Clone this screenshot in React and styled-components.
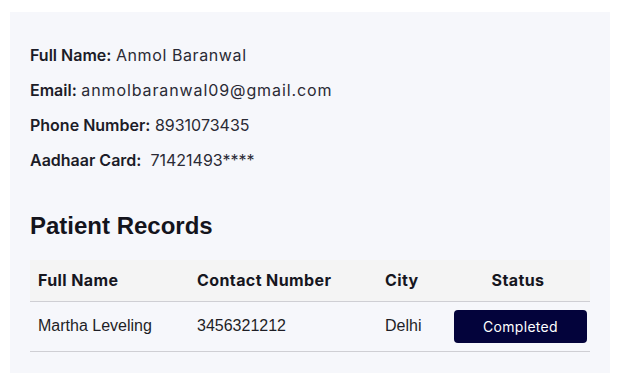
import React from "react";
import styled, { createGlobalStyle } from "styled-components";

const GlobalStyle = createGlobalStyle`
  body {
    margin: 0;
    background: #ffffff;
  }
`;

const profile = [
  { label: "Full Name:", value: "Anmol Baranwal" },
  { label: "Email:", value: "anmolbaranwal09@gmail.com", wide: true },
  { label: "Phone Number:", value: "8931073435", numeric: true },
  { label: "Aadhaar Card:", value: " 71421493****", numeric: true },
];

const records = [
  { name: "Martha Leveling", contact: "3456321212", city: "Delhi", status: "Completed" },
];

export default function App() {
  return (
    <>
      <GlobalStyle />
      <Page>
        <Panel>
          <Details>
            {profile.map((p) => (
              <DetailRow key={p.label}>
                <Label>{p.label}</Label>{" "}
                <Value $numeric={p.numeric} $wide={p.wide}>{p.value}</Value>
              </DetailRow>
            ))}
          </Details>

          <Heading>Patient Records</Heading>

          <Table>
            <thead>
              <tr>
                <Th $width="159px">Full Name</Th>
                <Th $width="188px">Contact Number</Th>
                <Th $width="69px">City</Th>
                <Th $center>Status</Th>
              </tr>
            </thead>
            <tbody>
              {records.map((r) => (
                <tr key={r.name}>
                  <Td>{r.name}</Td>
                  <Td>{r.contact}</Td>
                  <Td>{r.city}</Td>
                  <Td>
                    <StatusBadge>{r.status}</StatusBadge>
                  </Td>
                </tr>
              ))}
            </tbody>
          </Table>
        </Panel>
      </Page>
    </>
  );
}

const Page = styled.div`
  padding: 12px 21px 0 10px;
`;

const Panel = styled.div`
  background: #f6f7fb;
  padding: 32px 20px 22px 20px;
  min-height: 340px;
  box-sizing: border-box;
`;

const Details = styled.div`
  display: flex;
  flex-direction: column;
  gap: 13px;
`;

const DetailRow = styled.div`
  font-family: "Inter", "Noto Sans", sans-serif;
  font-size: 16px;
  line-height: 22px;
  color: #1c1c28;
  white-space: pre;
`;

const Label = styled.span`
  font-weight: 600;
`;

const Value = styled.span`
  font-weight: 400;
  letter-spacing: ${(p) => (p.$numeric ? "0" : p.$wide ? "0.9px" : "0.6px")};
  color: #2a2a35;
`;

const Heading = styled.h2`
  margin: 41px 0 0 0;
  font-family: "Liberation Sans", Arial, sans-serif;
  font-size: 24px;
  font-weight: 700;
  line-height: 28px;
  color: #14141c;
`;

const Table = styled.table`
  margin-top: 20px;
  width: 560px;
  border-collapse: collapse;
  table-layout: fixed;
`;

const Th = styled.th`
  box-sizing: border-box;
  width: ${(p) => p.$width || "auto"};
  height: 41px;
  padding: 0 8px;
  background: #f4f4f4;
  border-bottom: 1px solid #cfcfd4;
  text-align: ${(p) => (p.$center ? "center" : "left")};
  font-family: "Inter", "Noto Sans", sans-serif;
  font-size: 16px;
  font-weight: 700;
  letter-spacing: 0.4px;
  color: #16161e;
`;

const Td = styled.td`
  height: 49px;
  padding: 0 3px 0 8px;
  border-bottom: 1px solid #cfcfd4;
  font-family: "Liberation Sans", Arial, sans-serif;
  font-size: 16px;
  color: #1e1e26;
`;

const StatusBadge = styled.div`
  display: flex;
  align-items: center;
  justify-content: center;
  height: 33px;
  border-radius: 4px;
  background: #03033b;
  color: #ffffff;
  font-family: "Inter", "Noto Sans", sans-serif;
  font-size: 14px;
  letter-spacing: 0.3px;
`;
